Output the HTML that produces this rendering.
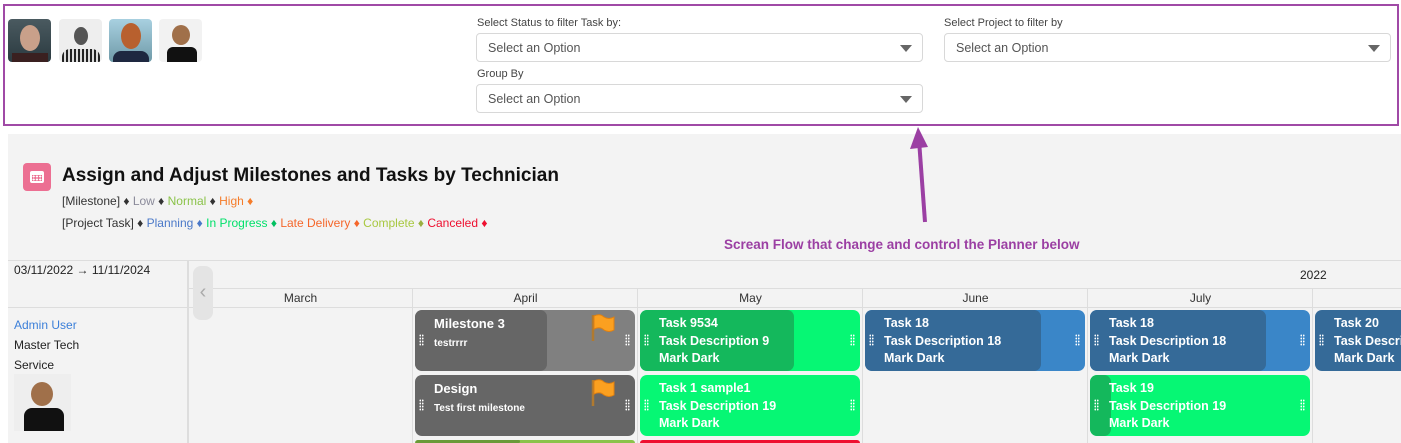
<!DOCTYPE html>
<html><head><meta charset="utf-8"><style>
*{box-sizing:border-box;margin:0;padding:0}
html{width:1401px;height:443px;overflow:hidden}
body{width:1401px;height:443px;overflow:hidden;background:#fff;font-family:"Liberation Sans",sans-serif;position:relative;font-size:12px;color:#222}
.abs{position:absolute}
.box{left:3px;top:4px;width:1396px;height:122px;border:2px solid #a04aa6}
.av{top:19px;width:43px;height:43px;border-radius:4px;overflow:hidden}
.lbl{font-size:11px;color:#444}
.sel{height:29px;border:1px solid #d8d8d8;border-radius:4px;background:#fff;font-size:12.5px;color:#555;padding:7px 11px}
.sel:after{content:"";position:absolute;right:10px;top:11px;border-left:6px solid transparent;border-right:6px solid transparent;border-top:7px solid #666}
.pl{left:8px;top:134px;width:1393px;height:309px;background:#f3f3f3}
.card{border-radius:7px;color:#fff;font-weight:bold;font-size:12.5px;overflow:hidden;white-space:nowrap}
.card .in{position:absolute;left:0;top:0;bottom:0;border-radius:7px}
.card .t{position:absolute;left:19px;top:5px;line-height:17.5px}
.grip{position:absolute;top:24px;width:5px;height:12px;background:radial-gradient(circle,#fff 0.8px,transparent 1px) 0 0/2.5px 3px}
.mon{top:289px;height:19px;text-align:center;font-size:12px;color:#333;border-left:1px solid #ddd;padding-top:2px}
.vl{top:308px;height:135px;width:1px;background:#ddd}
</style></head><body>
<div class="abs box"></div>
<div class="abs av" style="left:8px;background:linear-gradient(#4a5a60,#2b3a40)"><div class="abs" style="left:12px;top:6px;width:20px;height:26px;border-radius:50%;background:#c9a08a"></div><div class="abs" style="left:4px;top:34px;width:36px;height:10px;background:#3a2020"></div></div>
<div class="abs av" style="left:59px;background:#eee"><div class="abs" style="left:15px;top:8px;width:14px;height:18px;border-radius:50%;background:#555"></div><div class="abs" style="left:3px;top:30px;width:38px;height:13px;border-radius:8px 8px 0 0;background:repeating-linear-gradient(90deg,#222 0 2px,#ddd 2px 4px)"></div></div>
<div class="abs av" style="left:109px;background:linear-gradient(#a8d0e0,#6f9aa8)"><div class="abs" style="left:12px;top:4px;width:20px;height:26px;border-radius:50%;background:#b8602e"></div><div class="abs" style="left:4px;top:32px;width:36px;height:11px;background:#1e2840;border-radius:8px 8px 0 0"></div></div>
<div class="abs av" style="left:159px;background:#f2f2f2"><div class="abs" style="left:13px;top:6px;width:18px;height:20px;border-radius:50%;background:#a0704a"></div><div class="abs" style="left:8px;top:28px;width:30px;height:15px;background:#111;border-radius:6px 6px 0 0"></div></div>

<div class="abs lbl" style="left:477px;top:17px">Select Status to filter Task by:</div>
<div class="abs sel" style="left:476px;top:33px;width:447px">Select an Option</div>
<div class="abs lbl" style="left:477px;top:68px">Group By</div>
<div class="abs sel" style="left:476px;top:84px;width:447px">Select an Option</div>
<div class="abs lbl" style="left:944px;top:17px">Select Project to filter by</div>
<div class="abs sel" style="left:944px;top:33px;width:447px">Select an Option</div>

<div class="abs pl"></div>
<div class="abs" style="left:23px;top:163px;width:28px;height:28px;border-radius:4px;background:#ec6f92">
<div class="abs" style="left:7px;top:8px;width:14px;height:12px;border:2px solid #fff;border-top-width:4px;border-radius:2px;background:radial-gradient(circle,#fff 1px,transparent 1.2px) 0 0/3.3px 3px"></div></div>
<div class="abs" style="left:62px;top:165px;font-size:19px;font-weight:bold;color:#111">Assign and Adjust Milestones and Tasks by Technician</div>
<div class="abs" style="left:62px;top:194px;font-size:12px;color:#333">[Milestone] ♦ <span style="color:#8a8a9a">Low</span> ♦ <span style="color:#8bc34a">Normal</span> ♦ <span style="color:#f57c2a">High</span> <span style="color:#f57c2a">♦</span></div>
<div class="abs" style="left:62px;top:216px;font-size:12px;color:#333">[Project Task] ♦ <span style="color:#4a78c8">Planning</span> <span style="color:#4a78c8">♦</span> <span style="color:#00e06a">In Progress</span> <span style="color:#00c060">♦</span> <span style="color:#f5662a">Late Delivery</span> <span style="color:#f5662a">♦</span> <span style="color:#a8c840">Complete</span> <span style="color:#9ab040">♦</span> <span style="color:#ee1030">Canceled</span> <span style="color:#ee1030">♦</span></div>

<svg class="abs" style="left:900px;top:125px" width="40" height="100"><line x1="25" y1="97" x2="19" y2="15" stroke="#9b3fa3" stroke-width="4"/><polygon points="18,2 10,24 28,22" fill="#9b3fa3"/></svg>
<div class="abs" style="left:724px;top:237px;font-size:13.5px;font-weight:bold;color:#9b3fa3">Screan Flow that change and control the Planner below</div>

<div class="abs" style="left:8px;top:260px;width:1393px;height:1px;background:#ddd"></div>
<div class="abs" style="left:8px;top:307px;width:1393px;height:1px;background:#ddd"></div>
<div class="abs" style="left:188px;top:288px;width:1213px;height:1px;background:#ddd"></div>
<div class="abs" style="left:187px;top:260px;width:2px;height:183px;background:#ddd"></div>
<div class="abs" style="left:14px;top:263px;font-size:12px">03/11/2022 → 11/11/2024</div>
<div class="abs" style="left:1300px;top:268px;font-size:12px">2022</div>
<div class="abs" style="left:193px;top:266px;width:20px;height:54px;border-radius:8px;background:#e4e4e4;color:#aaa;font-size:20px;text-align:center;line-height:52px">‹</div>
<div class="abs mon" style="left:188px;width:225px;border-left:none">March</div>
<div class="abs mon" style="left:412px;width:226px">April</div>
<div class="abs mon" style="left:637px;width:226px">May</div>
<div class="abs mon" style="left:862px;width:226px">June</div>
<div class="abs mon" style="left:1087px;width:226px">July</div>
<div class="abs mon" style="left:1312px;width:100px"></div>
<div class="abs vl" style="left:412px"></div><div class="abs vl" style="left:637px"></div><div class="abs vl" style="left:862px"></div><div class="abs vl" style="left:1087px"></div><div class="abs vl" style="left:1312px"></div>

<div class="abs" style="left:14px;top:315px;line-height:20px;font-size:12px"><span style="color:#3b7fd9">Admin User</span><br>Master Tech<br>Service</div>
<div class="abs" style="left:14px;top:374px;width:57px;height:57px;background:#eee;overflow:hidden"><div class="abs" style="left:17px;top:8px;width:22px;height:24px;border-radius:50%;background:#a0704a"></div><div class="abs" style="left:10px;top:34px;width:40px;height:23px;background:#111;border-radius:8px 8px 0 0"></div></div>

<div class="abs card" style="left:415px;top:310px;width:220px;height:61px;background:#808080"><div class="in" style="width:132px;background:#666"></div><div class="t" style="font-size:13px">Milestone 3<br><span style="font-size:10px">testrrrr</span></div></div>
<div class="abs card" style="left:415px;top:375px;width:220px;height:61px;background:#666"><div class="t" style="font-size:13px">Design<br><span style="font-size:10px">Test first milestone</span></div></div>
<div class="abs card" style="left:415px;top:440px;width:220px;height:3px;border-radius:7px 7px 0 0;background:#8bc34a"><div class="in" style="width:105px;background:#6a9a38"></div></div>
<div class="abs card" style="left:640px;top:310px;width:220px;height:61px;background:#06f774"><div class="in" style="width:154px;background:#14b85c"></div><div class="t">Task 9534<br>Task Description 9<br>Mark Dark</div></div>
<div class="abs card" style="left:640px;top:375px;width:220px;height:61px;background:#06f774"><div class="t">Task 1 sample1<br>Task Description 19<br>Mark Dark</div></div>
<div class="abs card" style="left:640px;top:440px;width:220px;height:3px;border-radius:7px 7px 0 0;background:#ee1030"></div>
<div class="abs card" style="left:865px;top:310px;width:220px;height:61px;background:#3a86c8"><div class="in" style="width:176px;background:#356a98"></div><div class="t">Task 18<br>Task Description 18<br>Mark Dark</div></div>
<div class="abs card" style="left:1090px;top:310px;width:220px;height:61px;background:#3a86c8"><div class="in" style="width:176px;background:#356a98"></div><div class="t">Task 18<br>Task Description 18<br>Mark Dark</div></div>
<div class="abs card" style="left:1090px;top:375px;width:220px;height:61px;background:#06f774"><div class="in" style="width:21px;background:#14b85c"></div><div class="t">Task 19<br>Task Description 19<br>Mark Dark</div></div>
<div class="abs card" style="left:1315px;top:310px;width:100px;height:61px;background:#356a98"><div class="t">Task 20<br>Task Description 20<br>Mark Dark</div></div>

<div class="abs grip" style="left:419px;top:334px"></div><div class="abs grip" style="left:625px;top:334px"></div>
<div class="abs grip" style="left:419px;top:399px"></div><div class="abs grip" style="left:625px;top:399px"></div>
<div class="abs grip" style="left:644px;top:334px"></div><div class="abs grip" style="left:850px;top:334px"></div>
<div class="abs grip" style="left:644px;top:399px"></div><div class="abs grip" style="left:850px;top:399px"></div>
<div class="abs grip" style="left:869px;top:334px"></div><div class="abs grip" style="left:1075px;top:334px"></div>
<div class="abs grip" style="left:1094px;top:334px"></div><div class="abs grip" style="left:1300px;top:334px"></div>
<div class="abs grip" style="left:1094px;top:399px"></div><div class="abs grip" style="left:1300px;top:399px"></div>
<div class="abs grip" style="left:1319px;top:334px"></div>

<svg class="abs" style="left:590px;top:313px" width="26" height="30"><line x1="3" y1="2" x2="3" y2="28" stroke="#b07a30" stroke-width="2.5"/><path d="M4 3 Q10 0 14 4 Q19 7 24 4 L24 17 Q19 20 14 17 Q10 13 4 16 Z" fill="#fba020" stroke="#e08010"/></svg>
<svg class="abs" style="left:590px;top:378px" width="26" height="30"><line x1="3" y1="2" x2="3" y2="28" stroke="#b07a30" stroke-width="2.5"/><path d="M4 3 Q10 0 14 4 Q19 7 24 4 L24 17 Q19 20 14 17 Q10 13 4 16 Z" fill="#fba020" stroke="#e08010"/></svg>
</body></html>
